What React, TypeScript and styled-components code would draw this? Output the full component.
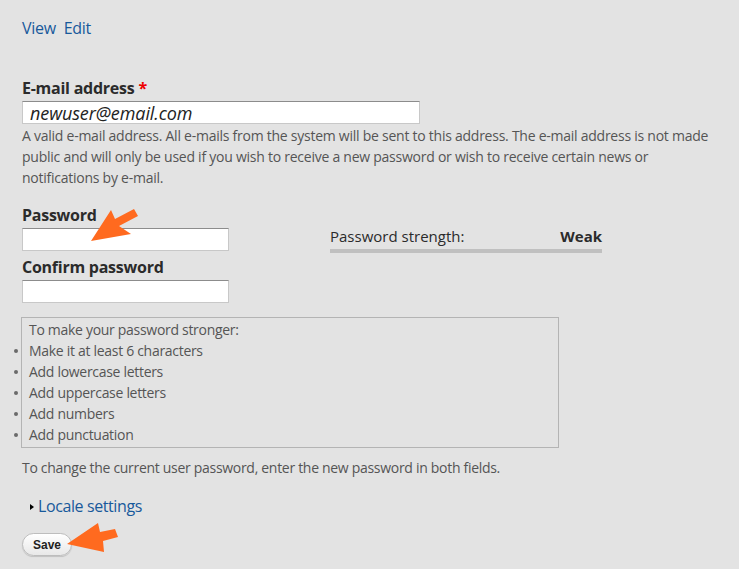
import React from "react";
import styled, { createGlobalStyle } from "styled-components";

const Global = createGlobalStyle`
  html, body { margin: 0; padding: 0; background: #e3e3e3; }
  body { font-family: "Open Sans", "DejaVu Sans", sans-serif; color: #333; }
  #root { min-height: 569px; }
`;

const Page = styled.div`
  position: relative;
  padding: 17px 22px 12px 22px;
  width: 739px;
  box-sizing: border-box;
  min-height: 569px;
`;

const Tabs = styled.nav`
  display: flex;
  gap: 8px;
  font-size: 16px;
  line-height: 22px;
  letter-spacing: -0.3px;
  margin-bottom: 38px;
`;

const Link = styled.a`
  color: #18599b;
  text-decoration: none;
`;

const Field = styled.div<{ $gap?: number }>`
  display: flex;
  flex-direction: column;
  margin-bottom: ${(p) => p.$gap ?? 0}px;
`;

const Label = styled.label`
  font-weight: 700;
  font-size: 16px;
  line-height: 22px;
  letter-spacing: -0.25px;
  color: #2b2b2b;
  margin-bottom: 2px;
`;

const Required = styled.span`
  color: #e00;
  margin-left: 4px;
`;

const Input = styled.input<{ $w: number }>`
  width: ${(p) => p.$w}px;
  height: 23px;
  box-sizing: border-box;
  border: 1px solid #c8c8c8;
  border-top-color: #8c8c8c;
  background: #fff;
  padding: 0 7px;
  font-family: "Open Sans", sans-serif;
  font-style: italic;
  font-size: 18px;
  letter-spacing: -0.1px;
  color: #222;
  outline: none;
  margin: 0;
`;

const Description = styled.p`
  margin: 1px 0 0 0;
  font-size: 14px;
  line-height: 21px;
  letter-spacing: -0.25px;
  color: #555;
  max-width: 700px;
`;

const PasswordRow = styled.div`
  display: flex;
  align-items: flex-start;
  margin-top: 16px;
`;

const PasswordCol = styled.div`
  display: flex;
  flex-direction: column;
  width: 308px;
`;

const Strength = styled.div`
  margin-top: 22px;
  width: 272px;
`;

const StrengthText = styled.div`
  display: flex;
  justify-content: space-between;
  font-size: 15px;
  line-height: 20px;
  color: #2b2b2b;
`;

const StrengthValue = styled.span`
  font-weight: 700;
`;

const StrengthBar = styled.div`
  height: 4px;
  background: #c0c0c0;
  margin-top: 3px;
`;

const Suggestions = styled.div`
  margin-top: 14px;
  width: 538px;
  box-sizing: border-box;
  border: 1px solid #b4b4b4;
  padding: 1px 0 2px 7px;
  font-size: 14px;
  line-height: 21px;
  letter-spacing: -0.3px;
  color: #555;
  margin-left: -1px;
`;

const List = styled.ul`
  margin: 0;
  padding: 0;
  list-style: none;
`;

const Item = styled.li`
  position: relative;
  &::before {
    content: "";
    position: absolute;
    left: -15px;
    top: 9px;
    width: 4px;
    height: 4px;
    border-radius: 50%;
    background: #6a6a6a;
  }
`;

const Note = styled.p`
  margin: 9px 0 0 0;
  font-size: 14px;
  line-height: 21px;
  letter-spacing: -0.3px;
  color: #555;
`;

const Locale = styled.div`
  display: flex;
  align-items: center;
  margin-top: 17px;
  margin-left: 8px;
  font-size: 16px;
  line-height: 22px;
  letter-spacing: -0.4px;
  gap: 4px;
`;

const Triangle = styled.span`
  width: 0;
  height: 0;
  border-top: 3.5px solid transparent;
  border-bottom: 3.5px solid transparent;
  border-left: 4px solid #000;
  margin-top: 1px;
`;

const SaveButton = styled.button`
  margin-top: 16px;
  width: 50px;
  height: 23px;
  border: 1px solid #bdbdbd;
  border-radius: 12px;
  background: linear-gradient(#ffffff, #e8e8e8);
  box-shadow: 0 1px 1px rgba(0, 0, 0, 0.15);
  font-family: "Liberation Sans", Arial, sans-serif;
  font-weight: 700;
  font-size: 12px;
  color: #222;
  padding: 0;
`;

const Arrow = styled.svg`
  position: absolute;
  pointer-events: none;
`;

export default function App() {
  return (
    <>
      <Global />
      <Page>
        <Tabs>
          <Link href="#">View</Link>
          <Link href="#">Edit</Link>
        </Tabs>

        <Field>
          <Label>
            E-mail address<Required>*</Required>
          </Label>
          <Input $w={398} defaultValue="newuser@email.com" />
          <Description>
            A valid e-mail address. All e-mails from the system will be sent to this address. The
            e-mail address is not made public and will only be used if you wish to receive a new
            password or wish to receive certain news or notifications by e-mail.
          </Description>
        </Field>

        <PasswordRow>
          <PasswordCol>
            <Field $gap={5}>
              <Label>Password</Label>
              <Input $w={207} type="password" />
            </Field>
            <Field>
              <Label>Confirm password</Label>
              <Input $w={207} type="password" />
            </Field>
          </PasswordCol>
          <Strength>
            <StrengthText>
              <span>Password strength:</span>
              <StrengthValue>Weak</StrengthValue>
            </StrengthText>
            <StrengthBar />
          </Strength>
        </PasswordRow>

        <Suggestions>
          To make your password stronger:
          <List>
            <Item>Make it at least 6 characters</Item>
            <Item>Add lowercase letters</Item>
            <Item>Add uppercase letters</Item>
            <Item>Add numbers</Item>
            <Item>Add punctuation</Item>
          </List>
        </Suggestions>

        <Note>To change the current user password, enter the new password in both fields.</Note>

        <Locale>
          <Triangle />
          <Link href="#">Locale settings</Link>
        </Locale>

        <SaveButton>Save</SaveButton>

        <Arrow width="739" height="569" viewBox="0 0 739 569" style={{ left: 0, top: 0 }}>
          <g fill="#ff6a1f">
            <polygon points="91,241 111,210 115,219 134,209 138,216 119,226 131,234" />
            <polygon points="67,544 98,523 100,532 115,529 118,537 103,541 104,552" />
          </g>
        </Arrow>
      </Page>
    </>
  );
}
